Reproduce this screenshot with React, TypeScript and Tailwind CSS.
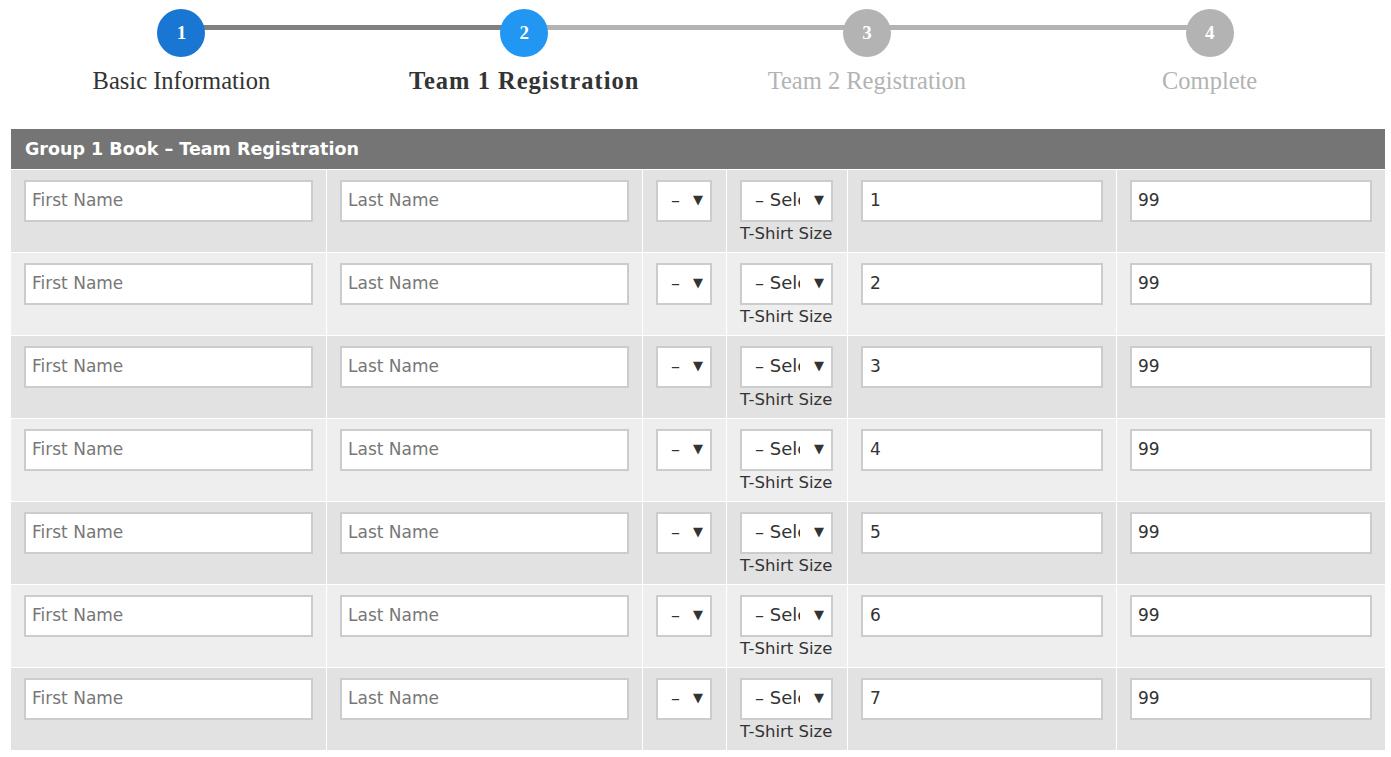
const steps = [
    { n: 1, label: "Basic Information", circle: "bg-[#1976d2]", text: "text-[#333]" },
    { n: 2, label: "Team 1 Registration", circle: "bg-[#2196f3]", text: "text-[#333] font-bold tracking-[1px]" },
    { n: 3, label: "Team 2 Registration", circle: "bg-[#b3b3b3]", text: "text-[#b3b3b3]" },
    { n: 4, label: "Complete", circle: "bg-[#b3b3b3]", text: "text-[#b3b3b3]" },
]

const Stepper = () => (
    <div className="flex h-[129px] px-[10px] pt-[9px]" style={{ fontFamily: "'Liberation Serif', serif" }}>
        {steps.map((s, i) => (
            <div key={s.n} className="relative flex flex-col items-center w-[344px]">
                {i < steps.length - 1 && (
                    <div className={`absolute top-[16px] left-[172px] w-[344px] h-[5px] ${i === 0 ? "bg-[#808080]" : "bg-[#b3b3b3]"}`} />
                )}
                <div className={`relative z-10 w-[48px] h-[48px] rounded-full flex items-center justify-center text-white text-[19px] font-bold ${s.circle}`}>
                    {s.n}
                </div>
                <div className={`mt-[9px] text-[24.5px] leading-[30px] whitespace-nowrap ${s.text}`}>{s.label}</div>
            </div>
        ))}
    </div>
)

const Box = ({ children, className = "" }: { children: React.ReactNode; className?: string }) => (
    <div className={`h-[42px] bg-white border-2 border-[#cccccc] flex items-center ${className}`}>{children}</div>
)

const Row = ({ num, even }: { num: number; even: boolean }) => {
    const cell = "px-[13px] pt-[10px] border-r border-white"
    return (
        <div className={`flex h-[83px] border-t border-white ${even ? "bg-[#eeeeee]" : "bg-[#e2e2e2]"}`}>
            <div className={`${cell} w-[316px]`}>
                <Box className="px-[6px] text-[#777]">First Name</Box>
            </div>
            <div className={`${cell} w-[316px]`}>
                <Box className="px-[6px] text-[#777]">Last Name</Box>
            </div>
            <div className={`${cell} w-[84px]`}>
                <Box className="w-[56px] pl-[13px] pr-[7px] justify-between text-[#333] text-[18px] leading-none">
                    <span className="pb-[2px]">–</span>
                    <span className="pb-[3px] text-[13px]">▼</span>
                </Box>
            </div>
            <div className={`${cell} w-[121px] flex flex-col`}>
                <Box className="w-[93px] pl-[13px] pr-[7px] text-[#333] text-[18px] leading-none">
                    <span className="w-[45px] pb-[2px] overflow-hidden whitespace-nowrap">– Select</span>
                    <span className="ml-auto pb-[3px] text-[13px]">▼</span>
                </Box>
                <div className="text-[16.5px] text-[#333] mt-[2px] leading-[20px] whitespace-nowrap">T-Shirt Size</div>
            </div>
            <div className={`${cell} w-[269px]`}>
                <Box className="px-[7px] text-[#333]">{num}</Box>
            </div>
            <div className="px-[13px] pt-[10px] flex-1">
                <Box className="px-[6px] text-[#333]">99</Box>
            </div>
        </div>
    )
}

export default function App() {
    return (
        <div className="w-[1391px] h-[757px] bg-white overflow-hidden">
            <Stepper />
            <div className="mx-[11px] w-[1374px] text-[17px]" style={{ fontFamily: "'DejaVu Sans', sans-serif" }}>
                <div className="h-[40px] bg-[#757575] text-white font-bold text-[17.5px] flex items-center px-[14px]">
                    Group 1 Book – Team Registration
                </div>
                {[1, 2, 3, 4, 5, 6, 7].map((n, i) => (
                    <Row key={n} num={n} even={i % 2 === 1} />
                ))}
            </div>
        </div>
    )
}
